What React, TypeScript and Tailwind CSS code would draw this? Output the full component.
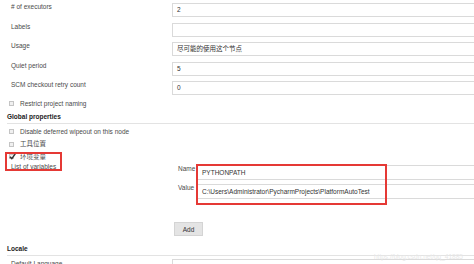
import React from 'react';

// Jenkins node configuration form (compressed screenshot)
const fields = [
  { label: '# of executors', value: '2' },
  { label: 'Labels', value: '' },
  { label: 'Usage', value: '尽可能的使用这个节点' },
  { label: 'Quiet period', value: '5' },
  { label: 'SCM checkout retry count', value: '0' },
];

const Box = ({ checked = false }: { checked?: boolean }) => (
  <span className="relative flex h-[5px] w-[5px] shrink-0 items-center justify-center border border-[#c4c4c4] bg-[#f0f0f0]">
    {checked && (
      <svg viewBox="0 0 8 8" className="absolute left-[-1px] top-[-2px] h-[7px] w-[7px]">
        <path d="M1 4.2 L3.2 6.4 L7.2 1" fill="none" stroke="#333" strokeWidth="1.6" />
      </svg>
    )}
  </span>
);

const CheckRow = ({ text, checked, className }: { text: string; checked?: boolean; className: string }) => (
  <div className={`flex h-[8px] items-center pl-[9px] leading-[8px] ${className}`}>
    <Box checked={checked} />
    <span className="ml-[6px] whitespace-nowrap">{text}</span>
  </div>
);

const Input = ({ value, className = '' }: { value: string; className?: string }) => (
  <div className={`flex w-[320px] shrink-0 items-center border border-[#dadada] bg-white pl-[4px] text-[#333] whitespace-nowrap ${className}`}>
    {value}
  </div>
);

export default function App() {
  return (
    <div className="relative h-[264px] w-[474px] overflow-hidden bg-white font-['Liberation_Sans','Noto_Sans_CJK_SC',sans-serif] text-[6.5px] text-[#4a4a4a]">
      <div className="flex flex-col gap-[5.5px] pt-[3px]">
        {fields.map(f => (
          <div key={f.label} className="flex h-[14px]">
            <div className="w-[172px] shrink-0 pl-[11px] leading-[8px]">{f.label}</div>
            <Input value={f.value} className="h-[14px]" />
          </div>
        ))}
      </div>

      <CheckRow text="Restrict project naming" className="mt-[4.5px]" />

      <div className="ml-[7px] mt-[5.5px] border-b border-[#e3e3e3] pb-[2px] font-bold leading-[8px] text-[#222]">
        Global properties
      </div>

      <CheckRow text="Disable deferred wipeout on this node" className="mt-[3.5px]" />
      <CheckRow text="工具位置" className="mt-[4.8px]" />
      <CheckRow text="环境变量" checked className="mt-[4.6px]" />

      <div className="mt-[2.6px] flex">
        <div className="w-[172px] shrink-0 pl-[11px] leading-[8px]">List of variables</div>
        <div className="flex flex-col pt-[1.5px]">
          <div className="flex h-[15px]">
            <div className="w-[25px] shrink-0 pl-[6px] leading-[8px]">Name</div>
            <Input value="PYTHONPATH" className="h-[15px]" />
          </div>
          <div className="mt-[4px] flex h-[15px]">
            <div className="w-[25px] shrink-0 pl-[6px] leading-[8px]">Value</div>
            <Input value="C:\Users\Administrator\PycharmProjects\PlatformAutoTest" className="h-[15px]" />
          </div>
          <button className="ml-[2px] mt-[23.5px] flex h-[14px] w-[29px] items-center justify-center border border-[#d4d4d4] bg-[#e4e4e4] text-[#333]">
            Add
          </button>
        </div>
      </div>

      <div className="ml-[7px] mt-[9px] border-b border-[#e3e3e3] pb-[2px] font-bold leading-[8px] text-[#222]">
        Locale
      </div>

      <div className="mt-[3px] flex">
        <div className="w-[172px] shrink-0 pl-[11px] pt-[1px] leading-[8px]">Default Language</div>
        <Input value="" className="h-[14px]" />
      </div>

      {/* screenshot annotations */}
      <div className="absolute left-[5px] top-[152px] h-[19px] w-[57px] border-2 border-[#e53935]" />
      <div className="absolute left-[196px] top-[164px] h-[41px] w-[191px] border-2 border-[#e53935]" />
      <div className="absolute left-[374px] top-[252px] whitespace-nowrap text-[6.5px] text-[#e8e8e8]">
        https://blog.csdn.net/qq_41885
      </div>
    </div>
  );
}
